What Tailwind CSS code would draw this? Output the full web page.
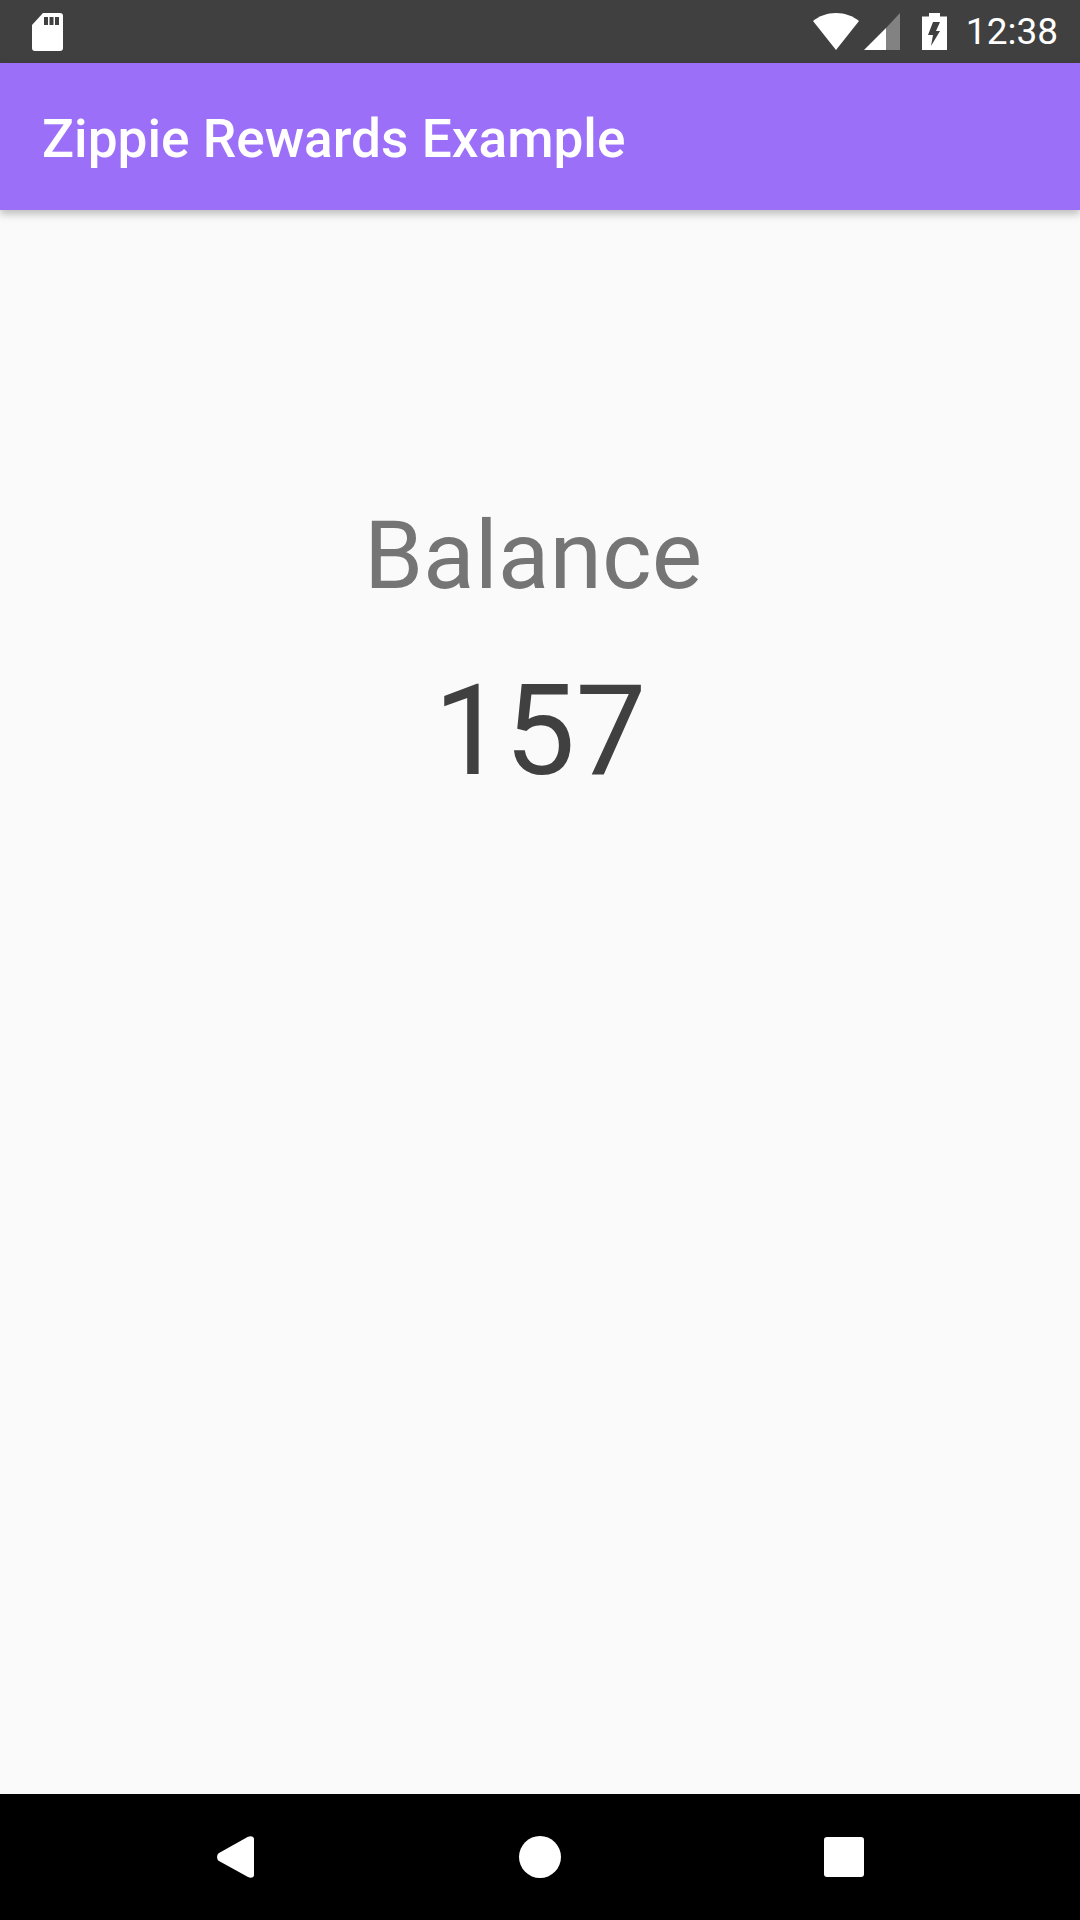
<!doctype html>
<html>
<head>
<meta charset="utf-8">
<script src="https://cdn.jsdelivr.net/npm/@tailwindcss/browser@4"></script>
</head>
<body class="m-0">
<div class="w-[1080px] h-[1920px] flex flex-col bg-[#fafafa] overflow-hidden font-['Roboto',sans-serif]">
  <div class="h-[63px] shrink-0 bg-[#404040] flex items-center justify-between pl-[32px] pr-[22px]">
    <svg class="w-[31px] h-[38px]" viewBox="0 0 31 38"><path fill="#fff" d="M11 0H28a3 3 0 0 1 3 3V35a3 3 0 0 1-3 3H3a3 3 0 0 1-3-3V12Z"/><path fill="#404040" d="M12 4h4v8h-4zM17.500 4h4v8h-4zM23 4h4v8h-4z"/></svg>
    <div class="flex items-center">
      <svg class="w-[46px] h-[37px]" viewBox="0 0 46 37"><path fill="#fff" d="M0 8C6 3 14 0 23 0s17 3 23 8L23 37Z"/></svg>
      <svg class="w-[36px] h-[37px] ml-[5px]" viewBox="0 0 36 37"><path fill="#fff" d="M0 37 22 15V37Z"/><path fill="#fff" fill-opacity=".35" d="M22 15 36 0V37H22Z"/></svg>
      <svg class="w-[25px] h-[37px] ml-[22px]" viewBox="0 0 25 37"><path fill="#fff" fill-rule="evenodd" d="M7 0H18V3.500H25V37H0V3.500H7ZM11 9 6 22H11L9 33 18 18H14L18 9Z"/></svg>
      <span class="ml-[19px] text-[37px] leading-none font-normal text-white">12:38</span>
    </div>
  </div>
  <div class="h-[147px] shrink-0 bg-[#9c6ff9] flex items-center pl-[42px] pt-[7px] shadow-[0_4px_8px_rgba(0,0,0,0.25)] relative">
    <h1 class="text-[53.2px] leading-none font-medium text-white">Zippie Rewards Example</h1>
  </div>
  <main class="flex-1 flex flex-col items-center pt-[294px]">
    <p class="text-[95px] leading-[104px] text-[#757575] ml-[-14px]">Balance</p>
    <p class="text-[126px] leading-[148px] text-[#404040] mt-[49px]">157</p>
  </main>
  <div class="h-[126px] shrink-0 bg-black relative">
    <svg class="absolute left-[217px] top-[42px] w-[38px] h-[42px]" viewBox="0 0 38 42"><path fill="#fff" d="M2 17 31 .8C34-.6 37 .5 37 3V39C37 41.500 34 42.500 31 41L2 25C-.6 23-.6 19 2 17Z"/></svg>
    <div class="absolute left-[519px] top-[42px] w-[42px] h-[42px] rounded-full bg-white"></div>
    <div class="absolute left-[824px] top-[43px] w-[40px] h-[40px] rounded-[3px] bg-white"></div>
  </div>
</div>
</body>
</html>
